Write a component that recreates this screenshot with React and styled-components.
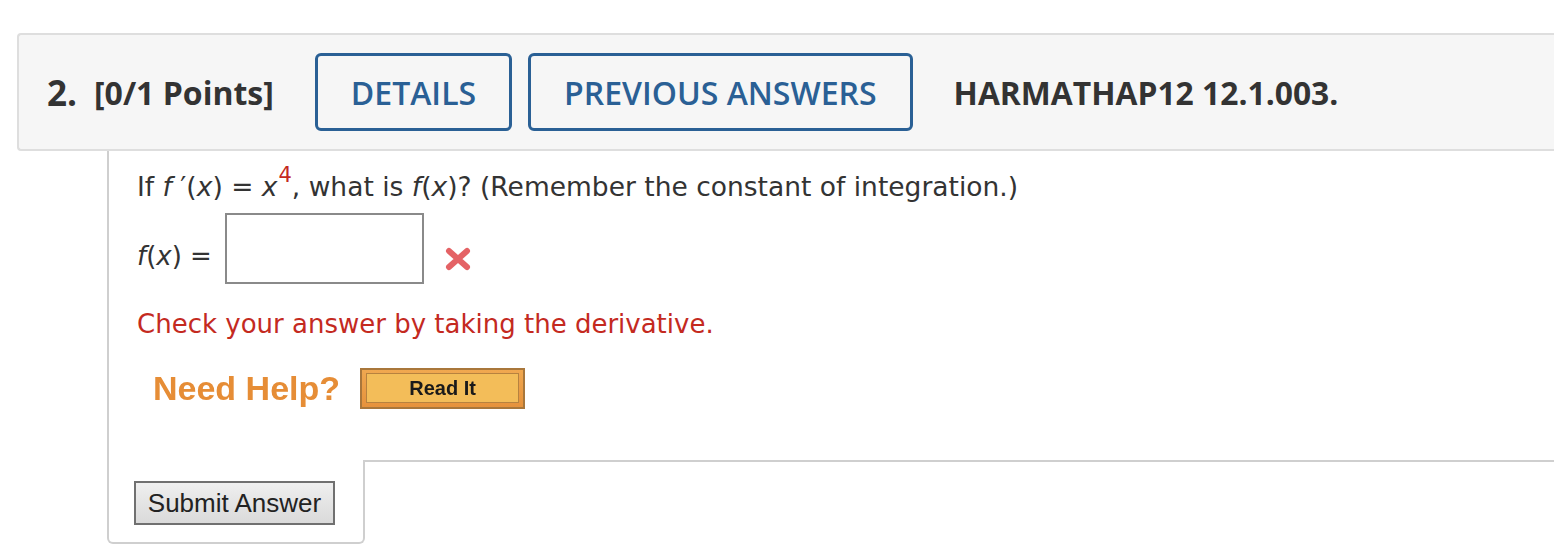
import React from "react";
import styled, { createGlobalStyle } from "styled-components";

const Global = createGlobalStyle`
  html, body { margin: 0; padding: 0; background: #fff; overflow: hidden; }
  body { font-family: "DejaVu Sans", Verdana, sans-serif; }
`;

const Page = styled.div`
  padding: 33px 0 0 17px;
  width: 1537px;
`;

const Header = styled.div`
  display: flex;
  align-items: center;
  height: 78px;
  padding: 18px 0 18px 28px;
  background: #f6f6f6;
  border: 2px solid #dedede;
  border-right: none;
  border-radius: 4px 0 0 4px;
  font-family: "Open Sans", sans-serif;
  color: #333;
`;

const Num = styled.span`
  font-size: 35px;
  font-weight: 700;
  margin-right: 17px;
`;

const Points = styled.span`
  font-size: 32px;
  font-weight: 700;
  margin-right: 41px;
`;

const TabButton = styled.button`
  box-sizing: border-box;
  height: 78px;
  padding: 0 33px;
  margin-right: ${(p) => p.$mr || 0}px;
  border: 3px solid #2a6095;
  border-radius: 6px;
  background: transparent;
  color: #2a6095;
  font-family: "Open Sans", sans-serif;
  font-size: 32px;
  font-weight: 600;
  cursor: pointer;
`;

const Code = styled.span`
  font-size: 31.8px;
  font-weight: 700;
`;

const Body = styled.div`
  margin-left: 90px;
`;

const Content = styled.div`
  border-left: 2px solid #cfcfcf;
  padding: 18px 0 51px 28px;
  color: #333;
  font-size: 26px;
`;

const Line = styled.div`
  line-height: 36px;
  font-size: ${(p) => p.$size || 26}px;
  color: ${(p) => p.$color || "#333"};
  margin-top: ${(p) => p.$mt || 0}px;
`;

const I = styled.i`
  font-style: italic;
`;

const Sup = styled.sup`
  color: #c42a1f;
  font-size: 21px;
  vertical-align: 0;
  position: relative;
  top: -14px;
  margin-left: 1px;
`;

const AnswerRow = styled.div`
  display: flex;
  align-items: flex-start;
  margin-top: 6px;
`;

const Label = styled.span`
  line-height: 36px;
  margin-top: 25px;
  margin-right: 13px;
`;

const Input = styled.input`
  box-sizing: border-box;
  width: 199px;
  height: 71px;
  border: 2px solid #8a8a8a;
  background: #fff;
  outline: none;
  margin: 0;
`;

const XMark = styled.svg`
  margin: 34px 0 0 21px;
  filter: blur(0.4px);
`;

const HelpRow = styled.div`
  display: flex;
  align-items: center;
  margin-top: 26px;
  padding-left: 16px;
`;

const NeedHelp = styled.span`
  font-family: "Liberation Sans", Arial, sans-serif;
  font-weight: 700;
  font-size: 34px;
  color: #e68d36;
  margin-right: 20px;
  filter: blur(0.5px);
`;

const ReadIt = styled.button`
  box-sizing: border-box;
  width: 165px;
  height: 41px;
  padding: 3px 4px 4px;
  border: 2px solid #a9773b;
  background: linear-gradient(#f0a850, #e6923c);
  display: flex;
  cursor: pointer;
`;

const ReadItInner = styled.span`
  flex: 1;
  display: flex;
  align-items: center;
  justify-content: center;
  border: 1px solid #b7823f;
  background: #f3bd59;
  font-family: "Liberation Sans", Arial, sans-serif;
  font-weight: 700;
  font-size: 20px;
  color: #1a1a1a;
  filter: blur(0.3px);
`;

const Footer = styled.div`
  display: flex;
`;

const SubmitTab = styled.div`
  box-sizing: border-box;
  width: 258px;
  padding: 21px 0 17px 25px;
  border: 2px solid #cfcfcf;
  border-top: none;
  border-radius: 0 0 6px 6px;
`;

const Filler = styled.div`
  flex: 1;
  border-top: 2px solid #cfcfcf;
  margin-left: -2px;
`;

const SubmitButton = styled.button`
  box-sizing: border-box;
  width: 201px;
  height: 44px;
  border: 2px solid #707070;
  background: linear-gradient(#efefef, #dadada);
  font-family: "Liberation Sans", Arial, sans-serif;
  font-size: 26px;
  color: #222;
  padding: 0;
  cursor: pointer;
`;

export default function App() {
  return (
    <>
      <Global />
      <Page>
        <Header>
          <Num>2.</Num>
          <Points>[0/1 Points]</Points>
          <TabButton $mr={16}>DETAILS</TabButton>
          <TabButton $mr={41}>PREVIOUS ANSWERS</TabButton>
          <Code>HARMATHAP12 12.1.003.</Code>
        </Header>
        <Body>
          <Content>
            <Line $size={26.5}>
              If <I>f</I> ′(<I>x</I>) = <I>x</I>
              <Sup>4</Sup>, what is <I>f</I>(<I>x</I>)? (Remember the constant of integration.)
            </Line>
            <AnswerRow>
              <Label>
                <I>f</I>(<I>x</I>) =
              </Label>
              <Input type="text" />
              <XMark width="26" height="24" viewBox="0 0 26 24">
                <path
                  d="M4 4 L22 20 M22 4 L4 20"
                  stroke="#e0474a"
                  strokeWidth="6"
                  strokeLinecap="round"
                  opacity="0.85"
                />
              </XMark>
            </AnswerRow>
            <Line $color="#c42a1f" $mt={22}>
              Check your answer by taking the derivative.
            </Line>
            <HelpRow>
              <NeedHelp>Need Help?</NeedHelp>
              <ReadIt>
                <ReadItInner>Read It</ReadItInner>
              </ReadIt>
            </HelpRow>
          </Content>
          <Footer>
            <SubmitTab>
              <SubmitButton>Submit Answer</SubmitButton>
            </SubmitTab>
            <Filler />
          </Footer>
        </Body>
      </Page>
    </>
  );
}
